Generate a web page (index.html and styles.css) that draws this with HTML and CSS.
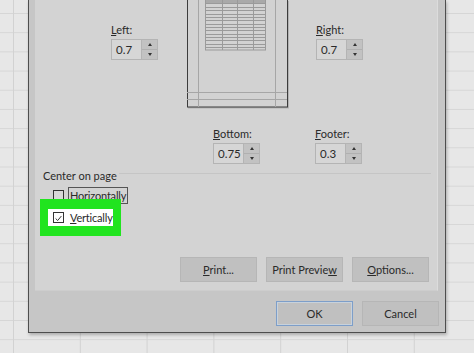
FILE: index.html
```html
<!DOCTYPE html>
<html lang="en">
<head>
    <meta charset="UTF-8">
    <title>Page Setup - Margins</title>
    <link rel="stylesheet" href="styles.css">
</head>
<body>
    <div class="dialog">
        <div class="panel">
            <div class="margins-row">
                <div class="field field-left">
                    <label class="field-label"><u>L</u>eft:</label>
                    <div class="spin">
                        <span class="spin-value">0.7</span>
                        <span class="spin-btns"><span class="up"></span><span class="down"></span></span>
                    </div>
                </div>

                <div class="preview">
                    <svg width="101" height="108" viewBox="0 0 101 108">
                        <rect x="0.5" y="-2" width="100" height="109" fill="#d2d2d2" stroke="#3c3c3c"/>
                        <line x1="11.5" y1="0" x2="11.5" y2="107" stroke="#a6a6a6"/>
                        <line x1="88.5" y1="0" x2="88.5" y2="107" stroke="#a6a6a6"/>
                        <line x1="0" y1="92.5" x2="100" y2="92.5" stroke="#a6a6a6"/>
                        <line x1="0" y1="99.5" x2="100" y2="99.5" stroke="#a6a6a6"/>
                        <rect x="18" y="0" width="61" height="3" fill="#a9a9a9"/>
                        <g stroke="#9a9a9a" fill="none">
                            <rect x="18.5" y="-1" width="60" height="51"/>
                            <line x1="35.5" y1="0" x2="35.5" y2="50"/>
                            <line x1="50.5" y1="0" x2="50.5" y2="50"/>
                            <line x1="66.5" y1="0" x2="66.5" y2="50"/>
                            <line x1="18" y1="3.5" x2="79" y2="3.5"/>
                            <line x1="18" y1="7.5" x2="79" y2="7.5"/>
                            <line x1="18" y1="10.5" x2="79" y2="10.5"/>
                            <line x1="18" y1="14.5" x2="79" y2="14.5"/>
                            <line x1="18" y1="17.5" x2="79" y2="17.5"/>
                            <line x1="18" y1="20.5" x2="79" y2="20.5"/>
                            <line x1="18" y1="24.5" x2="79" y2="24.5"/>
                            <line x1="18" y1="27.5" x2="79" y2="27.5"/>
                            <line x1="18" y1="30.5" x2="79" y2="30.5"/>
                            <line x1="18" y1="34.5" x2="79" y2="34.5"/>
                            <line x1="18" y1="37.5" x2="79" y2="37.5"/>
                            <line x1="18" y1="40.5" x2="79" y2="40.5"/>
                            <line x1="18" y1="44.5" x2="79" y2="44.5"/>
                            <line x1="18" y1="47.5" x2="79" y2="47.5"/>
                        </g>
                    </svg>
                </div>

                <div class="field field-right">
                    <label class="field-label"><u>R</u>ight:</label>
                    <div class="spin">
                        <span class="spin-value">0.7</span>
                        <span class="spin-btns"><span class="up"></span><span class="down"></span></span>
                    </div>
                </div>
            </div>

            <div class="margins-row bottom-row">
                <div class="field">
                    <label class="field-label"><u>B</u>ottom:</label>
                    <div class="spin">
                        <span class="spin-value">0.75</span>
                        <span class="spin-btns"><span class="up"></span><span class="down"></span></span>
                    </div>
                </div>
                <div class="field field-footer">
                    <label class="field-label"><u>F</u>ooter:</label>
                    <div class="spin">
                        <span class="spin-value">0.3</span>
                        <span class="spin-btns"><span class="up"></span><span class="down"></span></span>
                    </div>
                </div>
            </div>

            <div class="group-title">
                <span>Center on page</span>
            </div>

            <div class="check-row">
                <span class="checkbox"></span>
                <span class="check-label focused"><u>H</u>orizontally</span>
            </div>

            <div class="highlight">
                <div class="check-row">
                    <span class="checkbox checked">
                        <svg width="11" height="11" viewBox="0 0 11 11"><path d="M2 5.5 L4.5 8 L9 2.5" fill="none" stroke="#222" stroke-width="1.1"/></svg>
                    </span>
                    <span class="check-label"><u>V</u>ertically</span>
                </div>
            </div>

            <div class="panel-buttons">
                <button class="btn"><u>P</u>rint...</button>
                <button class="btn">Print Previe<u>w</u></button>
                <button class="btn"><u>O</u>ptions...</button>
            </div>
        </div>

        <div class="dialog-buttons">
            <button class="btn btn-default">OK</button>
            <button class="btn">Cancel</button>
        </div>
    </div>
</body>
</html>
```

FILE: styles.css
```css
* {
    margin: 0;
    padding: 0;
    box-sizing: border-box;
}

body {
    width: 474px;
    height: 353px;
    overflow: hidden;
    font-family: Lato, 'Noto Sans', sans-serif;
    font-size: 11px;
    color: #2a2a2a;
    background-color: #e7e7e7;
    background-image:
        linear-gradient(to right, #d2d2d2 1px, transparent 1px),
        linear-gradient(to bottom, #d6d6d6 1px, transparent 1px);
    background-size: 66.8px 19.2px;
    background-position: 13px 13px;
    padding-left: 28px;
}

u {
    text-decoration: underline;
    text-underline-offset: 1px;
}

.dialog {
    width: 418px;
    height: 333px;
    background: #c6c6c6;
    border: 1px solid #4e4e4e;
    border-top: none;
    box-shadow: 1px 2px 3px rgba(0, 0, 0, 0.25);
    padding: 0 6px;
}

.panel {
    width: 403px;
    height: 291px;
    background: #d3d3d3;
    border-right: 1px solid #dcdcdc;
    border-bottom: 1px solid #cdcdcd;
}

.margins-row {
    display: flex;
    align-items: flex-start;
    padding-left: 76px;
}

.field {
    width: 47px;
}

.field-left,
.field-right {
    margin-top: 22px;
}

.field-label {
    display: block;
    height: 16px;
    line-height: 16px;
    margin-bottom: 1px;
    white-space: nowrap;
}

.spin {
    display: flex;
    height: 21px;
    border: 1px solid #b4b4b4;
    background: #d6d6d6;
}

.spin-value {
    flex: 1;
    padding-left: 4px;
    line-height: 19px;
    font-size: 11.5px;
}

.spin-btns {
    width: 16px;
    display: flex;
    flex-direction: column;
    border-left: 1px solid #b4b4b4;
}

.spin-btns span {
    flex: 1;
    background: #c2c2c2;
    display: flex;
    align-items: center;
    justify-content: center;
}

.spin-btns .up {
    border-bottom: 1px solid #b0b0b0;
}

.spin-btns .up::before {
    content: "";
    border-left: 2.5px solid transparent;
    border-right: 2.5px solid transparent;
    border-bottom: 3px solid #333;
}

.spin-btns .down::before {
    content: "";
    border-left: 2.5px solid transparent;
    border-right: 2.5px solid transparent;
    border-top: 3px solid #333;
}

.preview {
    margin-left: 29px;
    margin-right: 28px;
    height: 108px;
}

.preview svg {
    display: block;
    filter: drop-shadow(1px 1px 0 rgba(0, 0, 0, 0.15));
}

.bottom-row {
    padding-left: 178px;
    margin-top: 18px;
    gap: 55px;
}

.group-title {
    display: flex;
    align-items: center;
    height: 16px;
    margin-top: 3px;
    padding-left: 8px;
    padding-right: 6px;
}

.group-title::after {
    content: "";
    flex: 1;
    height: 1px;
    background: #c5c5c5;
    margin-left: 2px;
    margin-top: -4px;
}

.check-row {
    display: flex;
    align-items: center;
    gap: 4px;
    height: 17px;
    margin-top: 4px;
    padding-left: 18px;
}

.checkbox {
    width: 11px;
    height: 11px;
    border: 1px solid #333;
    background: #d8d8d8;
    display: flex;
}

.checkbox.checked {
    background: #fff;
    border-color: #333;
}

.check-label {
    line-height: 15px;
    letter-spacing: -0.2px;
    padding: 0 1px;
    border: 1px solid transparent;
}

.check-label.focused {
    border-color: #555;
}

.highlight {
    position: relative;
    width: 81px;
    height: 37px;
    margin-left: 5px;
    margin-top: -5px;
    background: #21e41f;
    padding: 10px 8px;
}

.highlight .check-row {
    height: 17px;
    margin-top: 0;
    padding-left: 5px;
    background: #fff;
}

.panel-buttons {
    display: flex;
    justify-content: flex-end;
    gap: 9px;
    padding-right: 8px;
    margin-top: 21px;
}

.btn {
    width: 77px;
    height: 25px;
    font-family: inherit;
    font-size: 11px;
    color: #2a2a2a;
    background: #c0c0c0;
    border: 1px solid #b6b6b6;
}

.dialog-buttons {
    display: flex;
    justify-content: flex-end;
    gap: 9px;
    margin-top: 10px;
    padding-right: 0;
}

.btn-default {
    border: 1px solid #7d9ec9;
    box-shadow: inset 0 0 0 1px #c8d2dc;
}
```
